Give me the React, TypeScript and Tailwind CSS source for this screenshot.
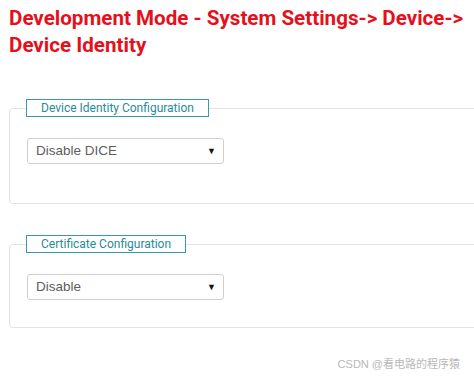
const ConfigPanel = ({
  title,
  value,
  bottomPad,
}: {
  title: string;
  value: string;
  bottomPad: string;
}) => {
  return (
    <fieldset
      className={`ml-[9px] w-[480px] rounded-[4px] border border-[#e3e3e3] pl-[16px] pr-4 pt-0 ${bottomPad}`}
    >
      <legend className="border border-[#3b9aa6] bg-white px-[14px] h-[18px] text-[12px] leading-[16px] text-[#2b8a99] font-['Roboto',sans-serif]">
        {title}
      </legend>
      <div className="relative mt-[21px] ml-[1px] w-[197px] h-[26px] rounded-[3px] border border-[#cfcfcf] bg-white">
        <span className="absolute left-[8px] top-[3px] text-[13.5px] leading-[18px] text-[#5e5e5e] font-['Liberation_Sans',sans-serif]">
          {value}
        </span>
        <span className="absolute right-[7px] top-[5px] text-[9px] leading-[14px] text-[#111]">
          ▼
        </span>
      </div>
    </fieldset>
  );
};

export default function App() {
  return (
    <div className="w-[474px] h-[380px] overflow-hidden bg-white flex flex-col">
      <h1 className="mx-[9px] mt-[5px] whitespace-nowrap text-[20.6px] leading-[27px] font-bold text-[#e5101b] font-['Roboto',sans-serif]">
        Development Mode - System Settings-&gt; Device-&gt;
        <br />
        Device Identity
      </h1>
      <div className="mt-[40px] flex flex-col gap-[31px]">
        <ConfigPanel
          title="Device Identity Configuration"
          value="Disable DICE"
          bottomPad="pb-[39px]"
        />
        <ConfigPanel
          title="Certificate Configuration"
          value="Disable"
          bottomPad="pb-[27px]"
        />
      </div>
      <div className="mt-auto mb-[8px] pr-[14px] text-right text-[11px] text-[#b8b8b8] font-['Liberation_Sans','Noto_Sans_CJK_SC',sans-serif]">
        CSDN @看电路的程序猿
      </div>
    </div>
  );
}
